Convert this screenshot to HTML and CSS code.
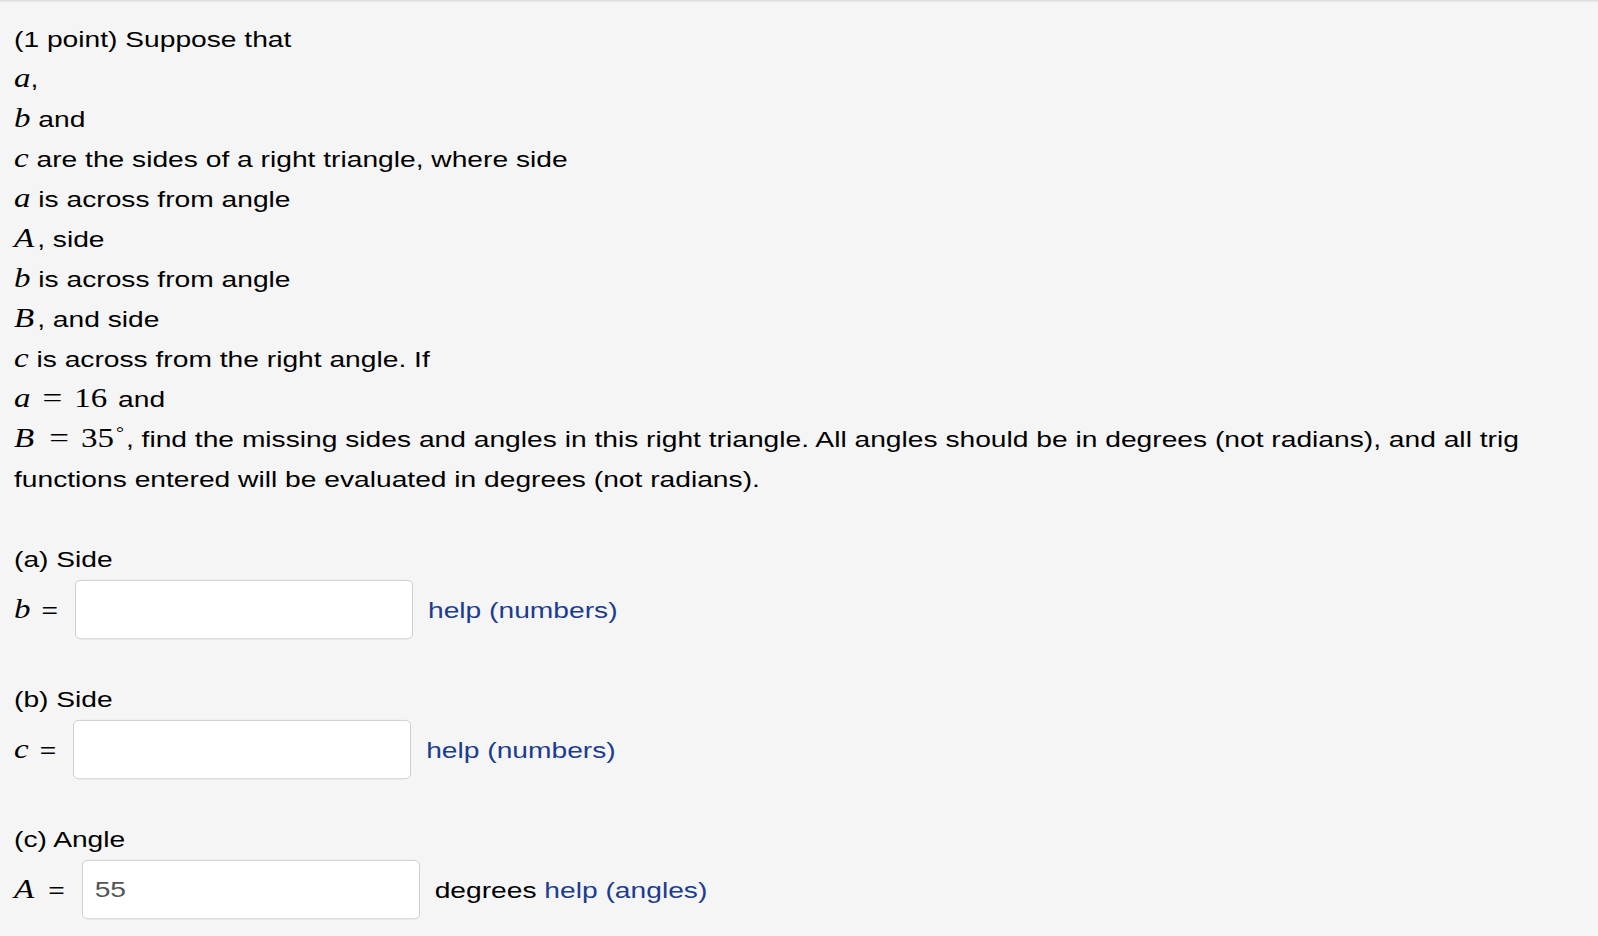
FILE: index.html
```html
<!DOCTYPE html>
<html lang="en">
<head>
<meta charset="utf-8">
<title>Right triangle problem</title>
<link rel="stylesheet" href="styles.css">
</head>
<body>
<div class="viewport">
<div class="page">
  <div class="problem">
    <div class="line">(1 point) Suppose that</div>
    <div class="line"><span class="math mi">a</span>,</div>
    <div class="line"><span class="math mi">b</span> and</div>
    <div class="line"><span class="math mi">c</span> are the sides of a right triangle, where side</div>
    <div class="line"><span class="math mi">a</span> is across from angle</div>
    <div class="line"><span class="math mi cap">A</span>, side</div>
    <div class="line"><span class="math mi">b</span> is across from angle</div>
    <div class="line"><span class="math mi cap">B</span>, and side</div>
    <div class="line"><span class="math mi">c</span> is across from the right angle. If</div>
    <div class="line"><span class="math mi">a</span><span class="math mo">=</span><span class="math mn">16</span> and</div>
    <div class="line"><span class="math mi cap">B</span><span class="math mo">=</span><span class="math mn">35</span><span class="math deg">&deg;</span>, find the missing sides and angles in this right triangle. All angles should be in degrees (not radians), and all trig</div>
    <div class="line">functions entered will be evaluated in degrees (not radians).</div>
  </div>

  <div class="part">
    <div class="label">(a) Side</div>
    <div class="row">
      <span class="math mi">b</span><span class="eq">=</span><input class="ans" type="text" aria-label="b"><a class="help" href="#">help (numbers)</a>
    </div>
  </div>

  <div class="part">
    <div class="label">(b) Side</div>
    <div class="row">
      <span class="math mi">c</span><span class="eq">=</span><input class="ans" type="text" aria-label="c"><a class="help" href="#">help (numbers)</a>
    </div>
  </div>

  <div class="part">
    <div class="label">(c) Angle</div>
    <div class="row">
      <span class="math mi cap">A</span><span class="eq">=</span><input class="ans" type="text" value="55" aria-label="A"><span class="unit">degrees <a class="help-inline" href="#">help (angles)</a></span>
    </div>
  </div>
</div>
</div>
</body>
</html>
```

FILE: styles.css
```css
html, body {
  margin: 0;
  height: 100%;
  overflow: hidden;
  background: #f5f5f5;
}

.viewport {
  width: 1598px;
  height: 936px;
  overflow: hidden;
}

.page {
  width: 1598px;
  height: 1168px;
  overflow: hidden;
  box-sizing: border-box;
  transform: scaleY(0.8);
  transform-origin: 0 0;
  border-top: 2.5px solid #e0e0e0;
  padding: 21.5px 14px 0 14px;
  font-family: "Liberation Sans", Arial, Helvetica, sans-serif;
  font-size: 28.2px;
  line-height: 50px;
  color: #000;
}

.math {
  font-family: "Liberation Serif", "Times New Roman", serif;
  font-size: 33px;
  line-height: 0;
}

.mi {
  font-style: italic;
}

.cap {
  margin-right: 3px;
}

.mo {
  font-size: 35px;
  margin: 0 12px;
}

.mn {
  margin-right: 3px;
}

.deg {
  font-size: 20px;
  position: relative;
  top: -12px;
  margin-left: -1px;
  margin-right: 2px;
}

.part {
  margin-top: 50px;
}

.part:first-child {
  margin-top: 0;
}

.label {
  line-height: 50px;
}

.row {
  display: flex;
  align-items: center;
  height: 74px;
  margin-top: 1px;
  margin-bottom: 6.5px;
  line-height: 50px;
}

.row .math {
  line-height: 50px;
}

.eq {
  margin-left: 11px;
}

.ans {
  width: 338px;
  height: 74px;
  box-sizing: border-box;
  margin: 0 0 0 17px;
  padding: 0 12px;
  border: 1.5px solid #c9c9c9;
  border-radius: 6px;
  background: #fff;
  font-family: "Liberation Sans", Arial, sans-serif;
  font-size: 28.2px;
  color: #555;
  outline: none;
}

.help {
  margin-left: 15px;
  color: #1c3d8f;
  text-decoration: none;
}

.unit {
  margin-left: 15px;
}

.help-inline {
  color: #1c3d8f;
  text-decoration: none;
}
```
